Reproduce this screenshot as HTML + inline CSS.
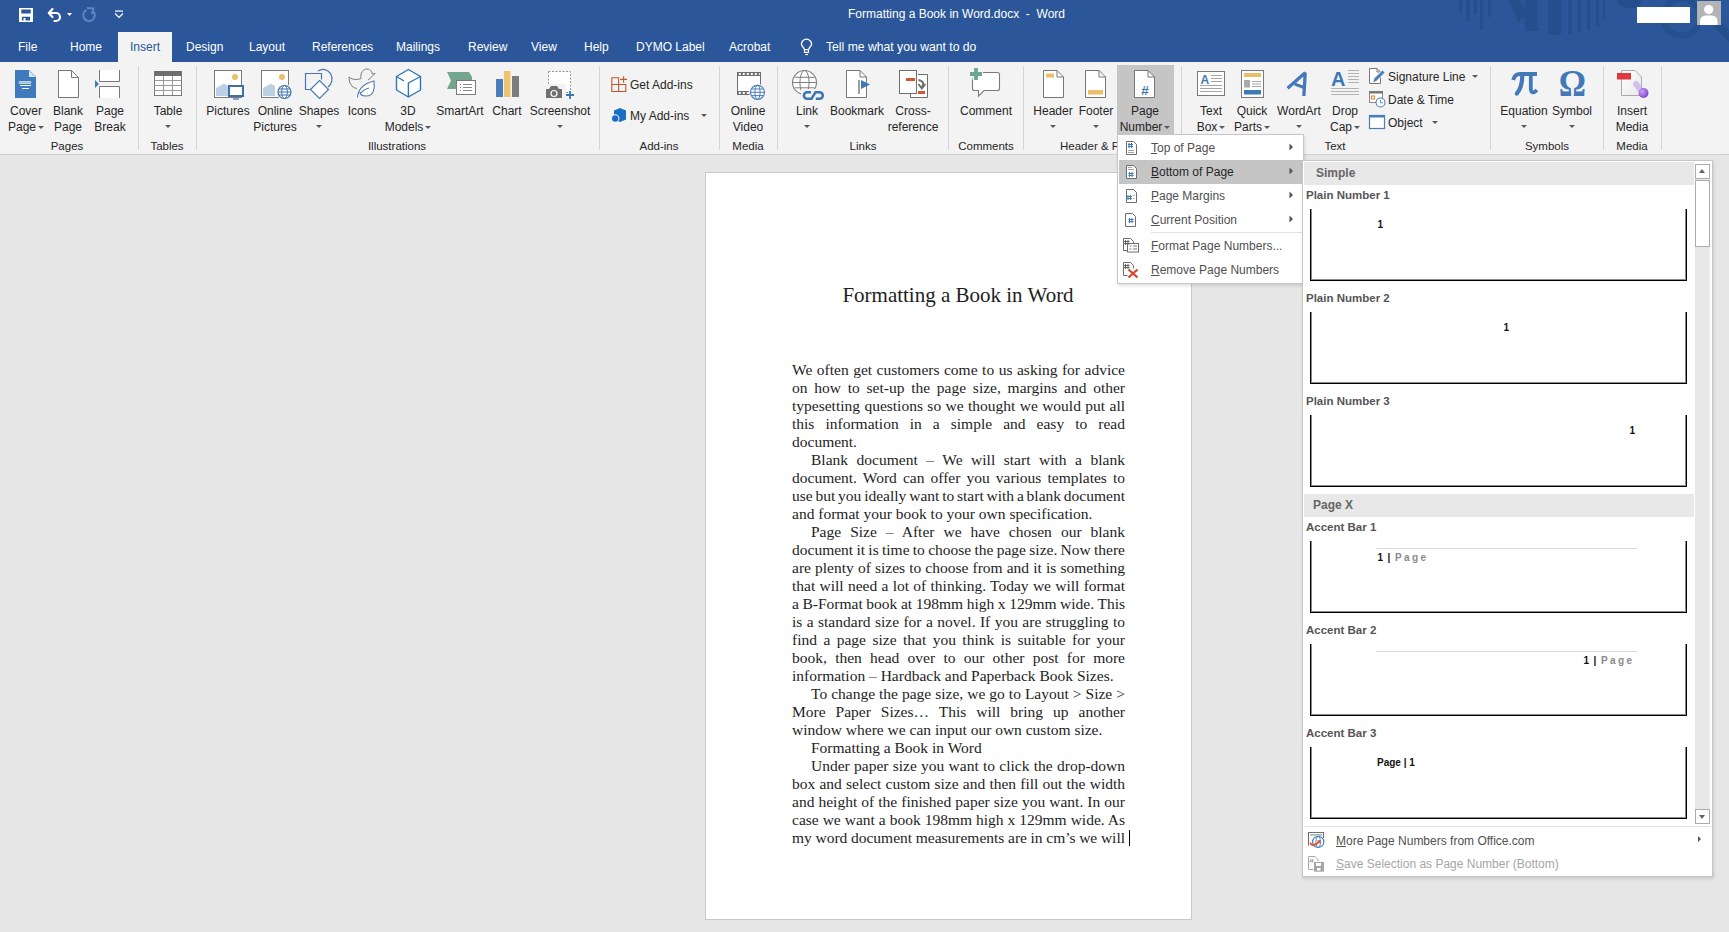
<!DOCTYPE html>
<html><head><meta charset="utf-8">
<style>
*{margin:0;padding:0;box-sizing:border-box}
html,body{width:1729px;height:932px;overflow:hidden;background:#e6e6e6;font-family:"Liberation Sans",sans-serif;}
.a{position:absolute}
#top{position:absolute;left:0;top:0;width:1729px;height:62px;background:#2b579a;}
.tab{position:absolute;top:40px;font-size:12px;color:#fff;white-space:nowrap;line-height:15px}
#ribbon{position:absolute;left:0;top:62px;width:1729px;height:93px;background:#f3f3f3;border-bottom:1px solid #d0d0d0}
.lbl{position:absolute;font-size:12px;color:#262626;white-space:nowrap;text-align:center;line-height:16px}
.glbl{position:absolute;top:139px;font-size:12px;color:#262626;white-space:nowrap;line-height:14px}
.sep{position:absolute;top:66px;width:1px;height:84px;background:#d5d5d5}
.dd{display:inline-block;width:0;height:0;border-left:3px solid transparent;border-right:3px solid transparent;border-top:3px solid #595959;vertical-align:middle;margin-left:2px}
.mi{position:absolute;left:1151px;font-size:12px;color:#505050;white-space:nowrap;line-height:14px}
.mi u{text-decoration:underline}
.gh{position:absolute;font-size:12px;font-weight:bold;color:#555;white-space:nowrap;line-height:14px}
.pv{position:absolute;left:1310px;width:377px;border-left:1px solid #000;border-right:1px solid #000;border-bottom:1px solid #000;background:#fff;box-shadow:inset 1px 0 0 #8a8a8a,inset -1px 0 0 #8a8a8a,inset 0 -1px 0 #8a8a8a}
.doc{position:absolute;left:792px;width:333px;font-family:"Liberation Serif",serif;font-size:15.5px;color:#1e1e1e;line-height:18px}
.ln{height:18px;white-space:pre}
.ln.l{text-align-last:left}
.ln.i{padding-left:19px}
</style></head><body>

<div id="top">
<svg class="a" style="left:0;top:0" width="1729" height="62">
 <g fill="#234f8c" opacity="0.9">
  <rect x="1459" y="0" width="3" height="13"/><rect x="1466" y="0" width="4" height="21"/><rect x="1474" y="0" width="3" height="14"/><rect x="1480" y="0" width="3" height="30"/><rect x="1488" y="0" width="3" height="17"/>
  <polygon points="1509,0 1519,0 1540,31 1537,31 1525,17 1518,22"/>
  <rect x="1525" y="0" width="12" height="31"/>
  <rect x="1548" y="0" width="13" height="35"/><rect x="1568" y="0" width="4" height="34"/><rect x="1578" y="0" width="3" height="32"/><rect x="1587" y="0" width="3" height="30"/><rect x="1596" y="0" width="3" height="26"/><rect x="1603" y="0" width="2" height="20"/>
  <path d="M1617,0 A12,8 0 0 0 1642,0 Z"/>
  <circle cx="1681.5" cy="17" r="18.5" fill="none" stroke="#24508e" stroke-width="6"/>
  <path d="M1700,0 L1729,30 L1729,42 L1694,8 Z"/>
 </g>
 <!-- save -->
 <g fill="#fff">
  <path d="M19,8 h14 v14 h-14 z M21.3,9.6 v3.9 h9.4 v-3.9 z M21.9,16.8 v3.7 h1.6 v-2.6 h2 v2.6 h4.6 v-3.7 z" fill-rule="evenodd"/>
 </g>
 <!-- undo -->
 <path d="M52.5,9 L48.8,13 L52.5,17 M49.5,13 H56 A4,4 0 0 1 56,21 H54.5" stroke="#fff" stroke-width="2.2" fill="none" stroke-linecap="round" stroke-linejoin="round"/>
 <path d="M67,13 h5 l-2.5,3 z" fill="#fff"/>
 <!-- redo faded -->
 <path d="M93,11 A5.8,5.8 0 1 1 86.5,10" stroke="#5a86c6" stroke-width="2" fill="none"/>
 <path d="M87,8 L93.5,8.5 L92,14" stroke="#5a86c6" stroke-width="2" fill="none"/>
 <!-- customize -->
 <rect x="115" y="10.5" width="8" height="1.2" fill="#fff"/>
 <path d="M115,13.5 L119,17.5 L123,13.5" stroke="#fff" stroke-width="1.2" fill="none"/>
 <!-- bulb -->
 <path d="M804.3,49.5 C804,47 801.4,46 801.4,44.3 A5.1,5.1 0 0 1 811.6,44.3 C811.6,46 809,47 808.7,49.5" stroke="#fff" stroke-width="1.3" fill="none" stroke-linejoin="round"/>
 <rect x="804.5" y="49.6" width="4" height="2.8" stroke="#fff" stroke-width="1.2" fill="none"/>
 <path d="M805.2,54.5 h2.8" stroke="#fff" stroke-width="1.1"/>
 <!-- user -->
 <rect x="1637" y="7" width="53" height="16" fill="#fff"/>
 <rect x="1697" y="1" width="24" height="24" fill="#b4b4b4"/>
 <path d="M1700,25 v-4 a5.5,5.5 0 0 1 5.5,-5.5 h6.5 a5.5,5.5 0 0 1 5.5,5.5 v4 z" fill="#fff"/>
 <circle cx="1708.7" cy="9.5" r="5.6" fill="#b4b4b4"/><circle cx="1708.7" cy="9.5" r="4.6" fill="#fff"/>
 
</svg>
<div class="a" style="left:848px;top:7px;font-size:12px;color:#fff;line-height:15px;white-space:pre">Formatting a Book in Word.docx  -  Word</div>
<div class="a" style="left:118px;top:32px;width:54px;height:30px;background:#f3f3f3"></div>
<div class="tab" style="left:18px">File</div>
<div class="tab" style="left:70px">Home</div>
<div class="tab" style="left:130px;color:#2b579a">Insert</div>
<div class="tab" style="left:186px">Design</div>
<div class="tab" style="left:249px">Layout</div>
<div class="tab" style="left:312px">References</div>
<div class="tab" style="left:396px">Mailings</div>
<div class="tab" style="left:468px">Review</div>
<div class="tab" style="left:531px">View</div>
<div class="tab" style="left:584px">Help</div>
<div class="tab" style="left:636px">DYMO Label</div>
<div class="tab" style="left:729px">Acrobat</div>
<div class="tab" style="left:826px;font-size:12.2px">Tell me what you want to do</div>
</div>

<div id="ribbon"></div>
<div class="a" style="left:1117px;top:65px;width:57px;height:70px;background:#c5c5c5"></div>
<div class="lbl" style="left:-34px;top:103px;width:120px">Cover</div>
<div class="lbl" style="left:-34px;top:119px;width:120px">Page<span class="dd"></span></div>
<div class="lbl" style="left:8px;top:103px;width:120px">Blank</div>
<div class="lbl" style="left:8px;top:119px;width:120px">Page</div>
<div class="lbl" style="left:50px;top:103px;width:120px">Page</div>
<div class="lbl" style="left:50px;top:119px;width:120px">Break</div>
<div class="lbl" style="left:7px;top:138px;width:120px;font-size:11.5px">Pages</div>
<div class="sep" style="left:138px"></div>
<div class="lbl" style="left:108px;top:103px;width:120px">Table</div>
<div class="a" style="left:165px;top:125px;width:0;height:0;border-left:3px solid transparent;border-right:3px solid transparent;border-top:3px solid #595959"></div>
<div class="lbl" style="left:107px;top:138px;width:120px;font-size:11.5px">Tables</div>
<div class="sep" style="left:196px"></div>
<div class="lbl" style="left:168px;top:103px;width:120px">Pictures</div>
<div class="lbl" style="left:215px;top:103px;width:120px">Online</div>
<div class="lbl" style="left:215px;top:119px;width:120px">Pictures</div>
<div class="lbl" style="left:259px;top:103px;width:120px">Shapes</div>
<div class="a" style="left:316px;top:125px;width:0;height:0;border-left:3px solid transparent;border-right:3px solid transparent;border-top:3px solid #595959"></div>
<div class="lbl" style="left:302px;top:103px;width:120px">Icons</div>
<div class="lbl" style="left:348px;top:103px;width:120px">3D</div>
<div class="lbl" style="left:348px;top:119px;width:120px">Models<span class="dd"></span></div>
<div class="lbl" style="left:400px;top:103px;width:120px">SmartArt</div>
<div class="lbl" style="left:447px;top:103px;width:120px">Chart</div>
<div class="lbl" style="left:500px;top:103px;width:120px">Screenshot</div>
<div class="a" style="left:557px;top:125px;width:0;height:0;border-left:3px solid transparent;border-right:3px solid transparent;border-top:3px solid #595959"></div>
<div class="lbl" style="left:337px;top:138px;width:120px;font-size:11.5px">Illustrations</div>
<div class="sep" style="left:599px"></div>
<div class="lbl" style="left:630px;top:77px;text-align:left">Get Add-ins</div>
<div class="lbl" style="left:630px;top:108px;text-align:left">My Add-ins</div>
<div class="a" style="left:701px;top:114px;width:0;height:0;border-left:3px solid transparent;border-right:3px solid transparent;border-top:3px solid #595959"></div>
<div class="lbl" style="left:599px;top:138px;width:120px;font-size:11.5px">Add-ins</div>
<div class="sep" style="left:719px"></div>
<div class="lbl" style="left:688px;top:103px;width:120px">Online</div>
<div class="lbl" style="left:688px;top:119px;width:120px">Video</div>
<div class="lbl" style="left:688px;top:138px;width:120px;font-size:11.5px">Media</div>
<div class="sep" style="left:777px"></div>
<div class="lbl" style="left:747px;top:103px;width:120px">Link</div>
<div class="a" style="left:804px;top:125px;width:0;height:0;border-left:3px solid transparent;border-right:3px solid transparent;border-top:3px solid #595959"></div>
<div class="lbl" style="left:797px;top:103px;width:120px">Bookmark</div>
<div class="lbl" style="left:853px;top:103px;width:120px">Cross-</div>
<div class="lbl" style="left:853px;top:119px;width:120px">reference</div>
<div class="lbl" style="left:803px;top:138px;width:120px;font-size:11.5px">Links</div>
<div class="sep" style="left:948px"></div>
<div class="lbl" style="left:926px;top:103px;width:120px">Comment</div>
<div class="lbl" style="left:926px;top:138px;width:120px;font-size:11.5px">Comments</div>
<div class="sep" style="left:1023px"></div>
<div class="lbl" style="left:993px;top:103px;width:120px">Header</div>
<div class="a" style="left:1050px;top:125px;width:0;height:0;border-left:3px solid transparent;border-right:3px solid transparent;border-top:3px solid #595959"></div>
<div class="lbl" style="left:1036px;top:103px;width:120px">Footer</div>
<div class="a" style="left:1093px;top:125px;width:0;height:0;border-left:3px solid transparent;border-right:3px solid transparent;border-top:3px solid #595959"></div>
<div class="lbl" style="left:1085px;top:103px;width:120px">Page</div>
<div class="lbl" style="left:1085px;top:119px;width:120px">Number<span class="dd"></span></div>
<div class="lbl" style="left:1060px;top:138px;text-align:left;font-size:11.5px">Header &amp; Footer</div>
<div class="sep" style="left:1181px"></div>
<div class="lbl" style="left:1151px;top:103px;width:120px">Text</div>
<div class="lbl" style="left:1151px;top:119px;width:120px">Box<span class="dd"></span></div>
<div class="lbl" style="left:1192px;top:103px;width:120px">Quick</div>
<div class="lbl" style="left:1192px;top:119px;width:120px">Parts<span class="dd"></span></div>
<div class="lbl" style="left:1239px;top:103px;width:120px">WordArt</div>
<div class="a" style="left:1296px;top:125px;width:0;height:0;border-left:3px solid transparent;border-right:3px solid transparent;border-top:3px solid #595959"></div>
<div class="lbl" style="left:1285px;top:103px;width:120px">Drop</div>
<div class="lbl" style="left:1285px;top:119px;width:120px">Cap<span class="dd"></span></div>
<div class="lbl" style="left:1388px;top:69px;text-align:left">Signature Line</div>
<div class="a" style="left:1472px;top:75px;width:0;height:0;border-left:3px solid transparent;border-right:3px solid transparent;border-top:3px solid #595959"></div>
<div class="lbl" style="left:1388px;top:92px;text-align:left">Date &amp; Time</div>
<div class="lbl" style="left:1388px;top:115px;text-align:left">Object</div>
<div class="a" style="left:1432px;top:121px;width:0;height:0;border-left:3px solid transparent;border-right:3px solid transparent;border-top:3px solid #595959"></div>
<div class="lbl" style="left:1275px;top:138px;width:120px;font-size:11.5px">Text</div>
<div class="sep" style="left:1490px"></div>
<div class="lbl" style="left:1464px;top:103px;width:120px">Equation</div>
<div class="a" style="left:1521px;top:125px;width:0;height:0;border-left:3px solid transparent;border-right:3px solid transparent;border-top:3px solid #595959"></div>
<div class="lbl" style="left:1512px;top:103px;width:120px">Symbol</div>
<div class="a" style="left:1569px;top:125px;width:0;height:0;border-left:3px solid transparent;border-right:3px solid transparent;border-top:3px solid #595959"></div>
<div class="lbl" style="left:1487px;top:138px;width:120px;font-size:11.5px">Symbols</div>
<div class="sep" style="left:1603px"></div>
<div class="lbl" style="left:1572px;top:103px;width:120px">Insert</div>
<div class="lbl" style="left:1572px;top:119px;width:120px">Media</div>
<div class="lbl" style="left:1572px;top:138px;width:120px;font-size:11.5px">Media</div>
<div class="sep" style="left:1661px"></div>
<svg class="a" style="left:0;top:0" width="1729" height="160">
<defs>
 <linearGradient id="pg" x1="0" y1="0" x2="1" y2="1"><stop offset="0" stop-color="#fff"/><stop offset="1" stop-color="#e8e8e8"/></linearGradient>
 <radialGradient id="ball" cx="0.35" cy="0.35" r="0.7"><stop offset="0" stop-color="#c9a4f0"/><stop offset="1" stop-color="#7c3fd0"/></radialGradient>
</defs>
<!-- Cover Page -->
<path d="M15,70 H29 L36,77 V98 H15 Z" fill="#3f7abd"/>
<path d="M29.5,70 V76.5 H36" fill="#fff" opacity="0.0"/>
<path d="M29,70.5 L35.5,77 H29 Z" fill="#dbe6f3"/>
<path d="M19,81 l1,1.5 l1,-1.5 l1,1.5 l1,-1.5 l1,1.5 l1,-1.5 l1,1.5 l1,-1.5 l1,1.5 l1,-1.5 l1,1.5 l1,-1.5 M19,82.5 l1,1.5 l1,-1.5 l1,1.5 l1,-1.5 l1,1.5 l1,-1.5 l1,1.5 l1,-1.5 l1,1.5 l1,-1.5 l1,1.5 l1,-1.5" stroke="#fff" stroke-width="0.7" fill="none"/>
<path d="M20,85.5 h11 M22,88.5 h7" stroke="#fff" stroke-width="1"/>
<!-- Blank Page -->
<path d="M58.5,70.5 H71.5 L78.5,77.5 V97.5 H58.5 Z" fill="#fff" stroke="#777" stroke-width="1"/>
<path d="M71.5,70.5 V77.5 H78.5" fill="none" stroke="#777" stroke-width="1"/>
<!-- Page Break -->
<path d="M99.5,70 V81.5 H119.5 V70" fill="#fff" stroke="#777" stroke-width="1"/>
<path d="M99.5,98 V86.5 H119.5 V98" fill="#fff" stroke="#777" stroke-width="1"/>
<path d="M95,80 L99,84 L95,88 Z" fill="#3f7abd"/>
<!-- Table -->
<rect x="154.5" y="71.5" width="27" height="24" fill="#fff" stroke="#7a7a7a" stroke-width="1"/>
<rect x="154" y="71" width="28" height="5" fill="#6e6e6e"/>
<path d="M154.5,80.5 h27 M154.5,85.5 h27 M154.5,90.5 h27 M163.5,76 v19 M172.5,76 v19" stroke="#9a9a9a" stroke-width="1"/>
<!-- Pictures -->
<rect x="214.5" y="70.5" width="27" height="27" fill="#fff" stroke="#7a7a7a" stroke-width="1"/>
<circle cx="235" cy="77" r="3" fill="#ebbe6a"/>
<path d="M216,96 V88 L224,83.5 L228,86 V96 Z" fill="#bcd0e6"/>
<rect x="228" y="85" width="16" height="12" fill="#f3f3f3"/>
<rect x="229" y="86" width="14" height="10" fill="#fff" stroke="#3e6fa8" stroke-width="2"/>
<path d="M233,99 h6" stroke="#3e6fa8" stroke-width="1.2"/>
<!-- Online Pictures -->
<rect x="261.5" y="70.5" width="27" height="27" fill="#fff" stroke="#7a7a7a" stroke-width="1"/>
<circle cx="282" cy="77" r="3" fill="#ebbe6a"/>
<path d="M263,96 V88 L271,83.5 L275,86 V96 Z" fill="#bcd0e6"/>
<circle cx="284.5" cy="92" r="8" fill="#f3f3f3"/>
<circle cx="284.5" cy="92" r="6.5" fill="#fff" stroke="#3e75b0" stroke-width="1.2"/>
<ellipse cx="284.5" cy="92" rx="2.8" ry="6.5" fill="none" stroke="#3e75b0" stroke-width="1"/>
<path d="M278,92 h13 M279,89 h11 M279,95 h11" stroke="#3e75b0" stroke-width="1"/>
<!-- Shapes -->
<path d="M311,89.5 H305.5 V73.5 H321.5 V79.5" fill="none" stroke="#4a76ad" stroke-width="1.2"/>
<path d="M318,71 A8,8.5 0 1 1 328,87" fill="none" stroke="#4a76ad" stroke-width="1.2"/>
<path d="M319.5,80.5 L328.5,89.5 L319.5,98.5 L310.5,89.5 Z" fill="#fff" stroke="#4a76ad" stroke-width="1.2"/>
<!-- Icons duck + leaf -->
<path d="M349,77 C349,86 354,88 357,88.5 M349,77 C353,80 357,80 361,78.5 C360,73 363,69 367,69 C371,69 372,72 372,74 L375,73.5 L372,76.5 C371,78 369,79 368,80" fill="none" stroke="#7a7a7a" stroke-width="1"/>
<path d="M357.5,97.5 C358,90 362,84 374,81 C375,88 374,96 366,96 C362,96 360,94 360,92 M360,94 C363,90 365,89 369,88" fill="#fff" stroke="#4a76ad" stroke-width="1.1"/>
<!-- 3D Models -->
<path d="M408.4,69.5 L420.5,76.5 V90 L408.4,97 L396.5,90 V76.5 Z M408.4,97 V83 L420.5,76.5 M396.5,76.5 L404,81" fill="#fff" stroke="#2e75b6" stroke-width="1.4" stroke-linejoin="round"/>
<!-- SmartArt -->
<path d="M447,72 H469 L472,77 V89 H447 L451,80.5 Z" fill="#74a58e"/>
<rect x="456.5" y="80.5" width="19" height="14" fill="#fff" stroke="#7a7a7a" stroke-width="1"/>
<path d="M460,84.5 h1 M463,84.5 h9 M460,87.5 h1 M463,87.5 h9 M460,90.5 h1 M463,90.5 h9" stroke="#7a7a7a" stroke-width="0.9"/>
<!-- Chart -->
<rect x="496" y="79" width="7" height="18" fill="#4a7ebb"/>
<rect x="504" y="71" width="6.5" height="26" fill="#efc46f"/>
<rect x="512" y="76" width="7" height="21" fill="#7d7d7d"/>
<!-- Screenshot -->
<rect x="548.5" y="71.5" width="22" height="21" fill="#fff" stroke="#999" stroke-width="1" stroke-dasharray="2,1.5"/>
<rect x="544" y="84" width="22" height="16" fill="#f3f3f3"/>
<path d="M546,89 H549 L551,86 H557 L559,89 H562 V98 H546 Z" fill="#6f6f6f"/>
<circle cx="554" cy="93.5" r="3" fill="none" stroke="#fff" stroke-width="1.2"/>
<path d="M566,95 h8 M570,91 v8" stroke="#3e75b0" stroke-width="1.8"/>
<!-- Get Add-ins -->
<path d="M611.8,77.7 h6.8 v6.8 h-6.8 z M611.8,84.5 h14 v7 h-14 z M618.6,84.5 v7" fill="none" stroke="#c5562b" stroke-width="1.1"/>
<path d="M620.2,79.4 h6.8 M623.6,76.2 v6.6" stroke="#c5562b" stroke-width="1.1"/>
<!-- My Add-ins -->
<path d="M620,108 L626,110.5 V119.5 L620,122 L614,119.5 V110.5 Z" fill="#1a6fc4"/>
<circle cx="615.2" cy="118.5" r="4.2" fill="#f3f3f3"/>
<circle cx="615.2" cy="118.5" r="3.2" fill="#1a6fc4"/>
<!-- Online Video -->
<rect x="737.5" y="72.5" width="23" height="22" fill="#fff" stroke="#6e6e6e" stroke-width="1"/>
<rect x="737" y="72" width="24" height="4" fill="#6e6e6e"/>
<rect x="737" y="91" width="24" height="4" fill="#6e6e6e"/>
<path d="M738.8,74 h21" stroke="#fff" stroke-width="2" stroke-dasharray="2,2"/>
<path d="M738.8,93 h21" stroke="#fff" stroke-width="2" stroke-dasharray="2,2"/>
<circle cx="757.5" cy="92.3" r="8.6" fill="#f3f3f3"/>
<circle cx="757.5" cy="92.3" r="7" fill="#fff" stroke="#4a7ebb" stroke-width="1.2"/>
<ellipse cx="757.5" cy="92.3" rx="2.6" ry="7" fill="none" stroke="#4a7ebb" stroke-width="1"/>
<path d="M750.5,92.3 h14 M751.5,89 h12 M751.5,95.6 h12" stroke="#4a7ebb" stroke-width="1"/>
<!-- Link -->
<circle cx="804.5" cy="82.5" r="12" fill="#fff" stroke="#7e7e7e" stroke-width="1.1"/>
<ellipse cx="804.5" cy="82.5" rx="4.6" ry="12" fill="none" stroke="#7e7e7e" stroke-width="1"/>
<path d="M792.5,82.5 h24 M794.5,77.3 h20 M794.5,87.8 h20" stroke="#7e7e7e" stroke-width="1"/>
<path d="M801,89 H825 V102 H801 Z" fill="#f3f3f3"/>
<path d="M811,92.2 H807.2 A3.3,3.3 0 0 0 807.2,98.8 H811.5 L815.5,92.2 H819.5 A3.3,3.3 0 0 1 819.5,98.8 H815.8" fill="none" stroke="#3e74b2" stroke-width="2.6"/>
<!-- Bookmark -->
<path d="M846.5,70.5 H860 L866.5,77 V97.5 H846.5 Z" fill="#fff" stroke="#777" stroke-width="1"/>
<path d="M860,70.5 V77 H866.5" fill="none" stroke="#777" stroke-width="1"/>
<path d="M859,80 V94" stroke="#777" stroke-width="1.4"/>
<path d="M861,80 L870,84.5 L861,89 Z" fill="#3e78b6"/>
<!-- Cross-reference -->
<path d="M918,74.5 H927.5 V97.5 H910.5 V94" fill="#fff" stroke="#6e6e6e" stroke-width="1"/>
<rect x="899.5" y="70.5" width="17" height="23" fill="#fff" stroke="#6e6e6e" stroke-width="1"/>
<rect x="906" y="78" width="9" height="3" fill="#d9542c"/>
<rect x="918" y="91" width="7" height="3" fill="#d9542c"/>
<path d="M918.5,80 C922,80.5 925,83 921.8,87.5" fill="none" stroke="#6e6e6e" stroke-width="2"/>
<path d="M918.5,84 L921.8,88.5 L925.5,84" fill="none" stroke="#6e6e6e" stroke-width="1.8"/>
<!-- Comment -->
<path d="M983,72.5 H997.5 C998.8,72.5 999.5,73.2 999.5,74.5 V88.5 C999.5,89.8 998.8,90.5 997.5,90.5 H984 L978.5,96.2 V90.5 H974.5 C973.2,90.5 972.5,89.8 972.5,88.5 V78" fill="#fff" stroke="#7a7a7a" stroke-width="1.1"/>
<path d="M972.5,78 V80 H983 V72.5" fill="#fff"/>
<path d="M976,68 V80 M970,74 H982" stroke="#69a892" stroke-width="3.8"/>
<!-- Header -->
<path d="M1043.5,70.5 H1057 L1063.5,77 V97.5 H1043.5 Z" fill="#fff" stroke="#777" stroke-width="1"/>
<path d="M1057,70.5 V77 H1063.5" fill="none" stroke="#777" stroke-width="1"/>
<rect x="1046" y="73.5" width="8" height="4" fill="#ebbe6a"/>
<!-- Footer -->
<path d="M1085.5,70.5 H1099 L1105.5,77 V97.5 H1085.5 Z" fill="#fff" stroke="#777" stroke-width="1"/>
<path d="M1099,70.5 V77 H1105.5" fill="none" stroke="#777" stroke-width="1"/>
<rect x="1088" y="90" width="15" height="4.5" fill="#ebbe6a"/>
<!-- Page Number -->
<path d="M1134.5,70.5 H1148 L1154.5,77 V97.5 H1134.5 Z" fill="#fff" stroke="#777" stroke-width="1"/>
<path d="M1148,70.5 V77 H1154.5" fill="none" stroke="#777" stroke-width="1"/>
<text x="1144.8" y="94.5" font-family="Liberation Sans" font-weight="bold" font-style="italic" font-size="13.5" fill="#3e78b6" text-anchor="middle">#</text>
<!-- Text Box -->
<rect x="1197.5" y="71.5" width="27" height="24" fill="#fff" stroke="#7a7a7a" stroke-width="1"/>
<text x="1200.5" y="83.5" font-family="Liberation Sans" font-weight="bold" font-size="12" fill="#3e78b6">A</text>
<path d="M1211,75.5 h11 M1211,78.5 h11 M1211,81.5 h11 M1200,85.5 h22 M1200,88.5 h22 M1200,91.5 h22" stroke="#9a9a9a" stroke-width="0.9"/>
<!-- Quick Parts -->
<rect x="1241.5" y="70.5" width="22" height="27" fill="#fff" stroke="#7a7a7a" stroke-width="1"/>
<rect x="1244" y="73" width="17" height="4" fill="#ebbe6a"/>
<rect x="1244" y="80" width="6" height="7.5" fill="#a8a8a8"/>
<path d="M1252,81.5 h9 M1252,84 h9 M1252,86.5 h9" stroke="#9a9a9a" stroke-width="0.9"/>
<rect x="1244" y="90" width="17" height="4.5" fill="#3e78b6"/>
<!-- WordArt -->
<path d="M1287.6,88.2 L1305.2,72.8 L1303.9,96" fill="none" stroke="#4479b9" stroke-width="3.3" stroke-linejoin="bevel"/>
<path d="M1294.8,84.2 L1304,87.5" fill="none" stroke="#4479b9" stroke-width="3"/>
<!-- Drop Cap -->
<text x="1331" y="86" font-family="Liberation Sans" font-weight="bold" font-size="20" fill="#3e78b6">A</text>
<path d="M1348,70.5 h11 M1348,73.5 h11 M1348,76.5 h11 M1348,79.5 h11 M1348,82.5 h11 M1331,88.5 h28 M1331,91.5 h28 M1331,94.5 h28" stroke="#aaa" stroke-width="0.9"/>
<!-- Signature Line -->
<path d="M1369.5,68.5 H1377 L1380.5,72 V83.5 H1369.5 Z" fill="#fff" stroke="#777" stroke-width="1"/>
<path d="M1377,68.5 V72 H1380.5" fill="none" stroke="#777" stroke-width="1"/>
<path d="M1372.5,83 L1374,78 L1382.5,69.5 L1385.5,72.5 L1377,81 Z" fill="#f3f3f3"/>
<path d="M1373.3,82.2 L1374.6,78.3 L1382.5,70.4 L1384.6,72.5 L1376.7,80.4 Z" fill="#4a7ebb"/>
<!-- Date & Time -->
<rect x="1369.5" y="91.5" width="13" height="11" fill="#fff" stroke="#888" stroke-width="1"/>
<rect x="1369" y="91" width="14" height="2.5" fill="#777"/>
<rect x="1371.5" y="96" width="3" height="3" fill="none" stroke="#e3821e" stroke-width="1"/>
<circle cx="1380.5" cy="102.5" r="4.5" fill="#fff" stroke="#4a7ebb" stroke-width="1.1"/>
<path d="M1380.5,100 V102.8 H1383" fill="none" stroke="#4a7ebb" stroke-width="0.9"/>
<!-- Object -->
<rect x="1369.5" y="115.5" width="15" height="13" fill="#fff" stroke="#4a7ebb" stroke-width="1.2"/>
<rect x="1369" y="115" width="16" height="2.5" fill="#4a7ebb"/>
<!-- Equation -->
<g fill="none" stroke="#4479b9" stroke-width="4">
<path d="M1513.2,80 C1514.5,75.2 1516.5,74 1520,74 H1537"/>
<path d="M1522.3,75 C1522.3,83 1520.5,89.5 1516.8,93.6" stroke-linecap="round" stroke-width="4.2"/>
<path d="M1530.8,75 V88 C1530.8,92.6 1533,94 1537,90.2" stroke-width="3.8"/>
</g>
<!-- Symbol -->
<g transform="translate(1572.5,96) scale(1,1.1) translate(-1572.5,-96)">
<text x="1572.5" y="96" font-family="Liberation Serif" font-weight="bold" font-size="34" fill="#4479b9" text-anchor="middle">Ω</text>
</g>
<!-- Insert Media -->
<path d="M1621.5,70.5 H1635 L1641.5,77 V95.5 H1621.5 Z" fill="url(#pg)" stroke="#aaa" stroke-width="1"/>
<rect x="1617" y="73" width="14" height="6.5" fill="#e0383e"/>
<path d="M1636,84 L1643,93" stroke="#c9b5ea" stroke-width="6" stroke-linecap="round" opacity="0.8"/>
<circle cx="1643.5" cy="93" r="5" fill="url(#ball)"/>
</svg>

<div class="a" style="left:705px;top:172px;width:487px;height:748px;background:#fff;border:1px solid #c8c8c8"></div>
<div class="a" style="left:758px;top:282.6px;width:400px;text-align:center;font-family:'Liberation Serif',serif;font-size:21px;line-height:24px;color:#1e1e1e">Formatting a Book in Word</div>
<div class="doc" style="top:361px">
<div class="ln" style="word-spacing:0.648px">We often get customers come to us asking for advice</div>
<div class="ln" style="word-spacing:2.882px">on how to set-up the page size, margins and other</div>
<div class="ln" style="word-spacing:0.510px">typesetting questions so we thought we would put all</div>
<div class="ln" style="word-spacing:7.188px">this information in a simple and easy to read</div>
<div class="ln">document.</div>
<div class="ln i" style="word-spacing:4.680px">Blank document – We will start with a blank</div>
<div class="ln" style="word-spacing:2.203px">document. Word can offer you various templates to</div>
<div class="ln" style="word-spacing:-1.052px">use but you ideally want to start with a blank document</div>
<div class="ln">and format your book to your own specification.</div>
<div class="ln i" style="word-spacing:5.139px">Page Size – After we have chosen our blank</div>
<div class="ln" style="word-spacing:-0.577px">document it is time to choose the page size. Now there</div>
<div class="ln" style="word-spacing:0.241px">are plenty of sizes to choose from and it is something</div>
<div class="ln" style="word-spacing:0.419px">that will need a lot of thinking. Today we will format</div>
<div class="ln" style="word-spacing:-0.281px">a B-Format book at 198mm high x 129mm wide. This</div>
<div class="ln" style="word-spacing:0.533px">is a standard size for a novel. If you are struggling to</div>
<div class="ln" style="word-spacing:2.566px">find a page size that you think is suitable for your</div>
<div class="ln" style="word-spacing:4.382px">book, then head over to our other post for more</div>
<div class="ln">information – Hardback and Paperback Book Sizes.</div>
<div class="ln i" style="word-spacing:0.134px">To change the page size, we go to Layout &gt; Size &gt;</div>
<div class="ln" style="word-spacing:6.100px">More Paper Sizes… This will bring up another</div>
<div class="ln">window where we can input our own custom size.</div>
<div class="ln i">Formatting a Book in Word</div>
<div class="ln i" style="word-spacing:0.404px">Under paper size you want to click the drop-down</div>
<div class="ln" style="word-spacing:0.327px">box and select custom size and then fill out the width</div>
<div class="ln" style="word-spacing:0.198px">and height of the finished paper size you want. In our</div>
<div class="ln" style="word-spacing:0.108px">case we want a book 198mm high x 129mm wide. As</div>
<div class="ln" style="word-spacing:-0.236px">my word document measurements are in cm’s we will</div>
</div>
<div class="a" style="left:1129px;top:830px;width:1px;height:16px;background:#000"></div>
<div class="a" style="left:1117px;top:134px;width:187px;height:150px;background:#fff;border:1px solid #c6c6c6;box-shadow:1px 2px 3px rgba(0,0,0,0.12)"></div>
<div class="a" style="left:1119px;top:160px;width:183px;height:24px;background:#c5c5c5"></div>
<div class="a" style="left:1151px;top:232px;width:151px;height:1px;background:#e1e1e1"></div>
<div class="mi" style="top:141px"><u>T</u>op of Page</div>
<div class="mi" style="top:165px;color:#262626"><u>B</u>ottom of Page</div>
<div class="mi" style="top:189px"><u>P</u>age Margins</div>
<div class="mi" style="top:213px"><u>C</u>urrent Position</div>
<div class="mi" style="top:239px"><u>F</u>ormat Page Numbers...</div>
<div class="mi" style="top:263px"><u>R</u>emove Page Numbers</div>
<svg class="a" style="left:1110px;top:130px" width="200" height="160">
 <g fill="#555">
  <path d="M179.5,13.5 l3.5,3.5 l-3.5,3.5 z"/>
  <path d="M179.5,37.5 l3.5,3.5 l-3.5,3.5 z"/>
  <path d="M179.5,61.5 l3.5,3.5 l-3.5,3.5 z"/>
  <path d="M179.5,85.5 l3.5,3.5 l-3.5,3.5 z"/>
 </g>
 <g fill="#fff" stroke="#6d6d6d" stroke-width="1">
  <path d="M16.5,11.5 h7 l3,3 v10 h-10 z"/>
  <path d="M16.5,35.5 h7 l3,3 v10 h-10 z"/>
  <path d="M16.5,59.5 h7 l3,3 v10 h-10 z"/>
  <path d="M15.5,83.5 h7 l3,3 v10 h-10 z"/>
  <path d="M13.5,108.5 h7 l3,3 v2"/><path d="M13.5,108.5 v12 h4"/>
  <rect x="17.5" y="113.5" width="11" height="8.5"/>
  <path d="M13.5,132.5 h7 l3,3 v3"/><path d="M13.5,132.5 v13 h4"/>
 </g>
 <g stroke="#3e78b6" stroke-width="1" fill="none">
  <path d="M19,13 v5 M21.5,13 v5 M18,14.5 h5 M18,16.5 h5"/>
  <path d="M19.5,42 v5 M22,42 v5 M18.5,43.5 h5 M18.5,45.5 h5"/>
  <path d="M18,65 v5 M20.5,65 v5 M17,66.5 h5 M17,68.5 h5"/>
  <path d="M19.5,88 v5 M22,88 v5 M18.5,89.5 h5 M18.5,91.5 h5"/>
 </g>
 <g stroke="#999" stroke-width="0.9">
  <path d="M18,20.5 h6 M18,22.5 h6"/>
  <path d="M18,37.5 h4 M18,39.5 h6"/>
  <path d="M23,65.5 h1.5 M23,68.5 h1.5"/>
 </g>
 <path d="M15.5,110 v5 M18,110 v5 M14,111.5 h5.5 M14,113.5 h5.5" stroke="#555" stroke-width="0.9"/>
 <path d="M19.5,116 h2 M23,116 h4 M19.5,119 h2 M23,119 h4" stroke="#777" stroke-width="1"/>
 <path d="M15.5,134 v5 M18,134 v5 M14,135.5 h5.5 M14,137.5 h5.5" stroke="#555" stroke-width="0.9"/>
 <path d="M18.5,139.5 L27.5,147.5 M27.5,139.5 L18.5,147.5" stroke="#d9442b" stroke-width="2.2"/>
</svg>

<div class="a" style="left:1302px;top:160px;width:411px;height:717px;background:#fff;border:1px solid #c6c6c6;box-shadow:1px 2px 3px rgba(0,0,0,0.12)"></div>
<div class="a" style="left:1695px;top:164px;width:15px;height:660px;background:#e8e8e8"></div>
<div class="a" style="left:1695px;top:164px;width:15px;height:15px;background:#fff;border:1px solid #ababab"></div>
<div class="a" style="left:1699px;top:169px;width:0;height:0;border-left:3.5px solid transparent;border-right:3.5px solid transparent;border-bottom:4px solid #606060"></div>
<div class="a" style="left:1695px;top:180px;width:15px;height:67px;background:#fff;border:1px solid #ababab"></div>
<div class="a" style="left:1695px;top:809px;width:15px;height:15px;background:#fff;border:1px solid #ababab"></div>
<div class="a" style="left:1699px;top:815px;width:0;height:0;border-left:3.5px solid transparent;border-right:3.5px solid transparent;border-top:4px solid #606060"></div>
<div class="a" style="left:1304px;top:162px;width:390px;height:22.5px;background:#e8e8e8"></div>
<div class="a" style="left:1304px;top:494px;width:390px;height:22.5px;background:#e8e8e8"></div>
<div class="gh" style="left:1316px;top:166px;color:#666">Simple</div>
<div class="gh" style="left:1313px;top:498px;color:#666">Page X</div>
<div class="gh" style="left:1306px;top:188px;font-size:11.5px">Plain Number 1</div>
<div class="pv" style="top:209px;height:72px"></div>
<div class="gh" style="left:1306px;top:291px;font-size:11.5px">Plain Number 2</div>
<div class="pv" style="top:312px;height:72px"></div>
<div class="gh" style="left:1306px;top:394px;font-size:11.5px">Plain Number 3</div>
<div class="pv" style="top:415px;height:72px"></div>
<div class="gh" style="left:1306px;top:520px;font-size:11.5px">Accent Bar 1</div>
<div class="pv" style="top:541px;height:72px"></div>
<div class="gh" style="left:1306px;top:623px;font-size:11.5px">Accent Bar 2</div>
<div class="pv" style="top:644px;height:72px"></div>
<div class="gh" style="left:1306px;top:726px;font-size:11.5px">Accent Bar 3</div>
<div class="pv" style="top:747px;height:72px"></div>
<div class="a" style="left:1377.5px;top:219px;font-size:10px;font-weight:bold;color:#111;line-height:12px;white-space:nowrap">1</div>
<div class="a" style="left:1503.5px;top:322px;font-size:10px;font-weight:bold;color:#111;line-height:12px;white-space:nowrap">1</div>
<div class="a" style="left:1629.5px;top:425px;font-size:10px;font-weight:bold;color:#111;line-height:12px;white-space:nowrap">1</div>
<div class="a" style="left:1376px;top:548px;width:261px;height:1px;background:#dadada"></div>
<div class="a" style="left:1376px;top:651px;width:261px;height:1px;background:#dadada"></div>
<div class="a" style="left:1377.5px;top:552px;font-size:10px;font-weight:bold;color:#111;line-height:12px;white-space:nowrap">1<span style="margin-left:4.5px">|</span><span style="margin-left:4.5px;font-weight:bold;color:#8a8a8a;letter-spacing:2.4px">Page</span></div>
<div class="a" style="left:1583.5px;top:655px;font-size:10px;font-weight:bold;color:#111;line-height:12px;white-space:nowrap">1<span style="margin-left:4.5px">|</span><span style="margin-left:4.5px;font-weight:bold;color:#8a8a8a;letter-spacing:2.4px">Page</span></div>
<div class="a" style="left:1377px;top:757px;font-size:10px;font-weight:bold;color:#111;line-height:12px;white-space:nowrap">Page | 1</div>
<div class="a" style="left:1305px;top:826px;width:405px;height:1px;background:#e1e1e1"></div>
<div class="mi" style="left:1336px;top:834px"><u>M</u>ore Page Numbers from Office.com</div>
<div class="mi" style="left:1336px;top:857px;color:#a6a6a6"><u>S</u>ave Selection as Page Number (Bottom)</div>
<div class="a" style="left:1698px;top:836px;width:0;height:0;border-top:3.5px solid transparent;border-bottom:3.5px solid transparent;border-left:3.5px solid #555"></div>
<svg class="a" style="left:1300px;top:825px" width="40" height="50">
 <path d="M8.5,20.5 V7.5 H23.5 V13" fill="#fff" stroke="#6e6e6e" stroke-width="1.1"/>
 <path d="M10,9.8 h12" stroke="#8fb0a0" stroke-width="1.4"/>
 <circle cx="18.2" cy="16.9" r="5.6" fill="#fff" stroke="#4a7ebb" stroke-width="1.2"/>
 <ellipse cx="18.2" cy="16.9" rx="2.3" ry="5.6" fill="none" stroke="#4a7ebb" stroke-width="0.9"/>
 <path d="M10.5,17.5 C10.5,21 16,21 19,16.5" fill="none" stroke="#d9532c" stroke-width="1.8"/>
 <path d="M17,15.5 L20.5,15 L20,18.5 Z" fill="#d9532c"/>
 <path d="M13.5,44.5 H8.5 V31.5 H15 L18,34.5 V36" fill="#fff" stroke="#a6a6a6" stroke-width="1"/>
 <path d="M10.5,34 v3.5 M12.5,34 v3.5 M9.5,35 h4 M9.5,36.5 h4" stroke="#a6a6a6" stroke-width="0.8"/>
 <rect x="14" y="37" width="10" height="9.7" fill="#a6a6a6"/>
 <rect x="16" y="38" width="5" height="3" fill="#fff"/>
 <rect x="17" y="43" width="3.5" height="2.5" fill="#fff"/>
</svg>
</body></html>
